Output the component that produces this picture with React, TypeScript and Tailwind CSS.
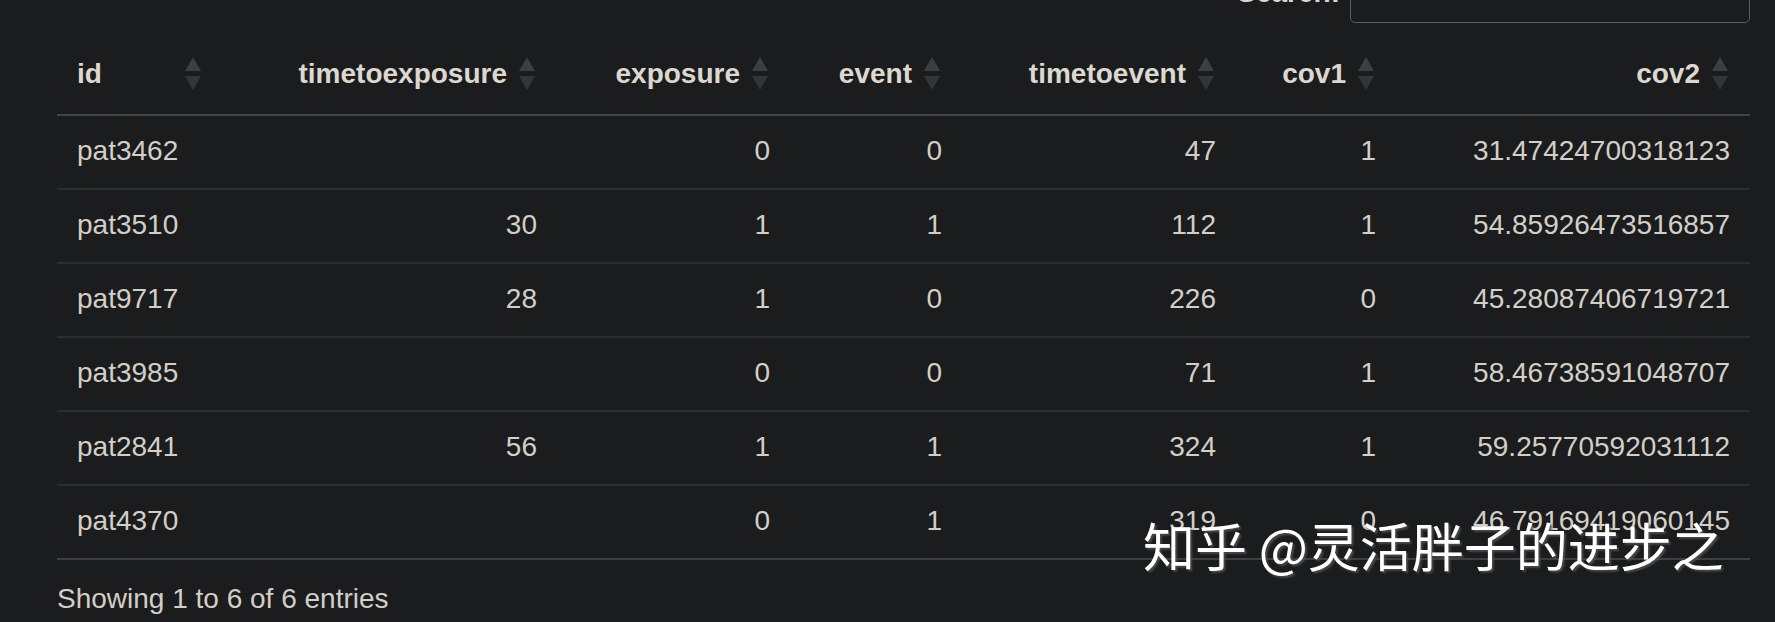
import React from "react";

type Row = [string, string, string, string, string, string, string];

const rows: Row[] = [
  ["pat3462", "", "0", "0", "47", "1", "31.47424700318123"],
  ["pat3510", "30", "1", "1", "112", "1", "54.85926473516857"],
  ["pat9717", "28", "1", "0", "226", "0", "45.28087406719721"],
  ["pat3985", "", "0", "0", "71", "1", "58.46738591048707"],
  ["pat2841", "56", "1", "1", "324", "1", "59.25770592031112"],
  ["pat4370", "", "0", "1", "319", "0", "46.79169419060145"],
];

const headers = ["id", "timetoexposure", "exposure", "event", "timetoevent", "cov1", "cov2"];
const widths = ["w-[166px]", "w-[334px]", "w-[233px]", "w-[172px]", "w-[274px]", "w-[160px]", "w-[354px]"];

function SortIcon() {
  return (
    <svg width="16" height="34" viewBox="0 0 16 34" className="shrink-0">
      <polygon points="8,0 16,14 0,14" fill="#3d3e41" />
      <polygon points="0,19 16,19 8,33" fill="#343538" />
    </svg>
  );
}

export default function App() {
  return (
    <div className="relative h-[622px] w-full overflow-hidden bg-[#1b1c1e] font-['Liberation_Sans',Arial,sans-serif] text-[28px] leading-[40px] text-[#d3cfc7]">
      <div className="pl-[57px] pr-[25px]">
        <div className="mt-[-27px] flex h-[50px] items-start justify-end gap-[10px]">
          <label className="font-bold text-[#dcd8d0]">Search:</label>
          <div className="h-[50px] w-[400px] rounded-[5px] border-[1.5px] border-[#5a5b5e] bg-[#1b1c1e]" />
        </div>
        <table className="w-[1693px] table-fixed border-collapse">
          <colgroup>
            {widths.map((w, i) => (
              <col key={i} className={w} />
            ))}
          </colgroup>
          <thead>
            <tr>
              {headers.map((h, i) => (
                <th
                  key={h}
                  className="border-b-2 border-[#414245] pb-[20px] pl-[20px] pr-[22px] pt-[31px] font-bold text-[#dcd8d0]"
                >
                  <div className={i === 0 ? "flex items-center justify-between" : "flex items-center justify-end gap-[12px]"}>
                    <span>{h}</span>
                    <SortIcon />
                  </div>
                </th>
              ))}
            </tr>
          </thead>
          <tbody>
            {rows.map((r, ri) => (
              <tr key={r[0]}>
                {r.map((c, ci) => (
                  <td
                    key={ci}
                    className={
                      (ri === rows.length - 1 ? "border-[#3e3f42] " : "border-[#2c2d30] ") +
                      "border-b-2 pb-[17px] pt-[15px] " +
                      (ci === 0 ? "pl-[20px] text-left" : "pr-[20px] text-right")
                    }
                  >
                    {c}
                  </td>
                ))}
              </tr>
            ))}
          </tbody>
        </table>
        <div className="mt-[19px]">Showing 1 to 6 of 6 entries</div>
      </div>
      <div className="absolute left-[1143px] top-[519px] whitespace-nowrap font-['Noto_Sans_CJK_SC',sans-serif] text-[52px] leading-[52px] text-white [text-shadow:2px_2px_2px_rgba(80,80,80,0.85)]">
        知乎 @灵活胖子的进步之
      </div>
    </div>
  );
}
